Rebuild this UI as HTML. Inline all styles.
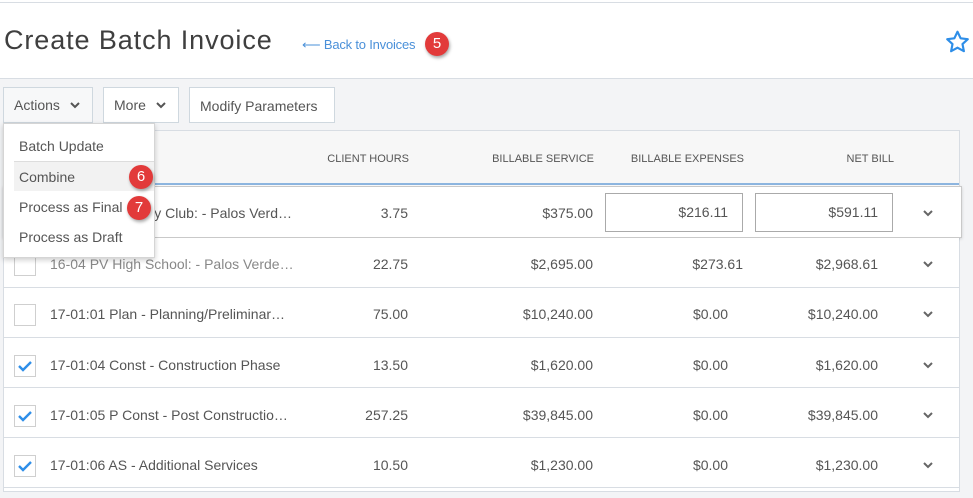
<!DOCTYPE html>
<html><head><style>
*{box-sizing:border-box;margin:0;padding:0}
body{width:973px;height:492px;overflow:hidden;background:#fff;font-family:"Liberation Sans",sans-serif;color:#4a4a4a;position:relative}
.a{position:absolute}
.topline{left:0;top:2px;width:973px;height:1px;background:#d8dde3}
h1{position:absolute;left:4px;top:25px;font-size:27px;font-weight:normal;color:#3f3f3f;letter-spacing:0.9px}
.back{left:302px;top:37px;font-size:13px;color:#4a90d9;letter-spacing:-0.2px}
.badge{width:24px;height:24px;border-radius:50%;background:#e23a3a;color:#fff;font-size:15px;text-align:center;line-height:24px;box-shadow:1px 2px 3px rgba(0,0,0,.35)}
.toolbar{left:0;top:78px;width:973px;height:420px;background:#f3f4f6;border-top:1px solid #d8dde3}
.btn{top:87px;height:36px;border:1px solid #cfd8df;background:#f7f8f9;font-size:14px;color:#555;line-height:34px;padding-left:10px}
.btn.m{background:#fff}
.table{left:3px;top:130px;width:957px;height:362px;background:#fff;border:1px solid #d8dde3}
.thead{left:3px;top:131px;width:956px;height:54px;background:#f7f7f7;border-bottom:2px solid #8db6e0}
.th{top:153px;font-size:11px;color:#555;text-align:right}
.row{left:4px;width:955px;height:50px;border-bottom:1px solid #d8dde3;background:#fff}
.sel{left:3px;top:186px;width:959px;height:52px;background:#fff;border:1px solid #c9c9c9;box-shadow:0 1px 3px rgba(0,0,0,.15)}
.c{font-size:14px;color:#555;text-align:right}
.n{font-size:14px;color:#555;left:50px}
.cb{left:14px;width:22px;height:22px;border:1px solid #cfcfcf;background:#fff}
.chev{left:922px;width:12px;height:8px}
.menu{left:3px;top:123px;width:152px;height:135px;background:#fff;border:1px solid #d5d5d5;box-shadow:0 2px 5px rgba(0,0,0,.2)}
.mi{left:19px;font-size:14px;color:#555}
.inp{height:39px;border:1px solid #aaa;background:#fff;font-size:14px;color:#555;text-align:right;padding-right:14px;line-height:37px}
</style></head><body>
<div class="a topline"></div>
<h1>Create Batch Invoice</h1>
<div class="a back">⟵ Back to Invoices</div>
<div class="a badge" style="left:425px;top:32px">5</div>
<svg class="a" style="left:944px;top:29px" width="27" height="26" viewBox="0 0 24 24"><path d="M12 2.5l2.9 6.1 6.6.8-4.9 4.5 1.3 6.6L12 17.2l-5.9 3.3 1.3-6.6-4.9-4.5 6.6-.8z" fill="none" stroke="#2e8ee8" stroke-width="2" stroke-linejoin="round"/></svg>
<div class="a toolbar"></div>
<div class="a btn" style="left:3px;width:90px">Actions</div>
<div class="a btn m" style="left:103px;width:76px">More</div>
<div class="a btn m" style="left:189px;width:146px;line-height:36px">Modify Parameters</div>
<svg class="a" style="left:70px;top:102px" width="10" height="7"><path d="M1 1l4 4 4-4" fill="none" stroke="#555" stroke-width="2"/></svg>
<svg class="a" style="left:156px;top:102px" width="10" height="7"><path d="M1 1l4 4 4-4" fill="none" stroke="#555" stroke-width="2"/></svg>
<div class="a table"></div>
<div class="a thead"></div>
<div class="a th" style="left:300px;width:109px">CLIENT HOURS</div>
<div class="a th" style="left:450px;width:144px">BILLABLE SERVICE</div>
<div class="a th" style="left:600px;width:144px">BILLABLE EXPENSES</div>
<div class="a th" style="left:750px;width:144px">NET BILL</div>

<div class="a sel"></div>
<div class="a n" style="top:205px">16-03 PV Country Club: - Palos Verd…</div>
<div class="a c" style="left:300px;width:108px;top:205px">3.75</div>
<div class="a c" style="left:450px;width:143px;top:205px">$375.00</div>
<div class="a inp" style="left:605px;top:193px;width:138px">$216.11</div>
<div class="a inp" style="left:755px;top:193px;width:138px">$591.11</div>
<svg class="a chev" style="top:210px"><path d="M2 1l4 4 4-4" fill="none" stroke="#666" stroke-width="2"/></svg>

<div class="a row" style="top:238px"></div>
<div class="a cb" style="top:254px"></div>
<div class="a n" style="top:256px;color:#888">16-04 PV High School: - Palos Verde…</div>
<div class="a c" style="left:300px;width:108px;top:256px">22.75</div>
<div class="a c" style="left:450px;width:143px;top:256px">$2,695.00</div>
<div class="a c" style="left:600px;width:143px;top:256px">$273.61</div>
<div class="a c" style="left:750px;width:128px;top:256px">$2,968.61</div>
<svg class="a chev" style="top:261px"><path d="M2 1l4 4 4-4" fill="none" stroke="#666" stroke-width="2"/></svg>

<div class="a row" style="top:288px"></div>
<div class="a cb" style="top:304px"></div>
<div class="a n" style="top:306px">17-01:01 Plan - Planning/Preliminar…</div>
<div class="a c" style="left:300px;width:108px;top:306px">75.00</div>
<div class="a c" style="left:450px;width:143px;top:306px">$10,240.00</div>
<div class="a c" style="left:600px;width:128px;top:306px">$0.00</div>
<div class="a c" style="left:750px;width:128px;top:306px">$10,240.00</div>
<svg class="a chev" style="top:311px"><path d="M2 1l4 4 4-4" fill="none" stroke="#666" stroke-width="2"/></svg>

<div class="a row" style="top:338px"></div>
<div class="a cb" style="top:355px"></div>
<svg class="a" style="left:18px;top:361px" width="14" height="11"><path d="M1 5l4 4 8-8" fill="none" stroke="#2e8ee8" stroke-width="2.4"/></svg>
<div class="a n" style="top:357px">17-01:04 Const - Construction Phase</div>
<div class="a c" style="left:300px;width:108px;top:357px">13.50</div>
<div class="a c" style="left:450px;width:143px;top:357px">$1,620.00</div>
<div class="a c" style="left:600px;width:128px;top:357px">$0.00</div>
<div class="a c" style="left:750px;width:128px;top:357px">$1,620.00</div>
<svg class="a chev" style="top:362px"><path d="M2 1l4 4 4-4" fill="none" stroke="#666" stroke-width="2"/></svg>

<div class="a row" style="top:388px"></div>
<div class="a cb" style="top:405px"></div>
<svg class="a" style="left:18px;top:411px" width="14" height="11"><path d="M1 5l4 4 8-8" fill="none" stroke="#2e8ee8" stroke-width="2.4"/></svg>
<div class="a n" style="top:407px">17-01:05 P Const - Post Constructio…</div>
<div class="a c" style="left:300px;width:108px;top:407px">257.25</div>
<div class="a c" style="left:450px;width:143px;top:407px">$39,845.00</div>
<div class="a c" style="left:600px;width:128px;top:407px">$0.00</div>
<div class="a c" style="left:750px;width:128px;top:407px">$39,845.00</div>
<svg class="a chev" style="top:412px"><path d="M2 1l4 4 4-4" fill="none" stroke="#666" stroke-width="2"/></svg>

<div class="a row" style="top:438px"></div>
<div class="a cb" style="top:455px"></div>
<svg class="a" style="left:18px;top:461px" width="14" height="11"><path d="M1 5l4 4 8-8" fill="none" stroke="#2e8ee8" stroke-width="2.4"/></svg>
<div class="a n" style="top:457px">17-01:06 AS - Additional Services</div>
<div class="a c" style="left:300px;width:108px;top:457px">10.50</div>
<div class="a c" style="left:450px;width:143px;top:457px">$1,230.00</div>
<div class="a c" style="left:600px;width:128px;top:457px">$0.00</div>
<div class="a c" style="left:750px;width:128px;top:457px">$1,230.00</div>
<svg class="a chev" style="top:462px"><path d="M2 1l4 4 4-4" fill="none" stroke="#666" stroke-width="2"/></svg>

<div class="a menu"></div>
<div class="a" style="left:14px;top:161px;width:140px;height:1px;background:#ddd"></div>
<div class="a" style="left:14px;top:162px;width:140px;height:29px;background:#f2f2f2"></div>
<div class="a mi" style="top:138px">Batch Update</div>
<div class="a mi" style="top:169px">Combine</div>
<div class="a mi" style="top:199px">Process as Final</div>
<div class="a mi" style="top:229px">Process as Draft</div>
<div class="a badge" style="left:129px;top:165px">6</div>
<div class="a badge" style="left:127px;top:196px">7</div>
</body></html>
